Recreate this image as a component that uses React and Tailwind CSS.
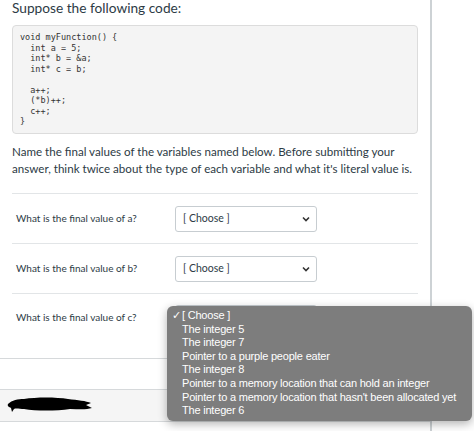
const codeLines = [
  "void myFunction() {",
  "  int a = 5;",
  "  int* b = &a;",
  "  int* c = b;",
  "",
  "  a++;",
  "  (*b)++;",
  "  c++;",
  "}",
];

const options = [
  "[ Choose ]",
  "The integer 5",
  "The integer 7",
  "Pointer to a purple people eater",
  "The integer 8",
  "Pointer to a memory location that can hold an integer",
  "Pointer to a memory location that hasn't been allocated yet",
  "The integer 6",
];

const Chevron = () => (
  <svg width="8" height="6" viewBox="0 0 8 6" className="text-[#333]">
    <path d="M1 1.5 L4 4.5 L7 1.5" fill="none" stroke="currentColor" strokeWidth="1.6" />
  </svg>
);

const SelectBox = ({ open }) => (
  <div className="w-[142px] h-[26px] border border-[#c7cdd1] rounded-[3px] bg-white flex items-center justify-between pl-[7px] pr-[6px]">
    <span className="text-[10.5px] text-[#2d3b45]">{open ? "" : "[ Choose ]"}</span>
    {!open && <Chevron />}
  </div>
);

const Row = ({ label, last }) => (
  <div className={`flex items-start pl-1 ${last ? "h-[64px] pt-[11px]" : "h-[50px] pt-3 border-b border-[#e2e5e7]"}`}>
    <div className="w-[159px] text-[10px] leading-[13px] text-[#2d3b45] pt-[6px]">{label}</div>
    <SelectBox open={last} />
  </div>
);

export default function App() {
  return (
    <div className="relative w-[474px] h-[431px] bg-white overflow-hidden font-['Lato',sans-serif]">
      <div className="w-[432px] h-full border-r-2 border-[#cdd2d5]">
        <div className="px-3">
          <h2 className="text-[13.7px] leading-[16px] text-[#2d3b45] pb-[9px]">Suppose the following code:</h2>
          <pre className="bg-[#f4f4f4] border border-[#dcdcdc] rounded-[4px] px-[7px] py-[6px] font-['DejaVu_Sans_Mono',monospace] text-[8.5px] leading-[10.5px] text-[#333]">
            {codeLines.map((l, i) => (
              <div key={i} className="h-[10.5px]">{l}</div>
            ))}
          </pre>
          <p className="mt-[9px] text-[11.6px] leading-[17px] text-[#2d3b45]">
            Name the final values of the variables named below. Before submitting your answer, think twice about the type of each variable and what it's literal value is.
          </p>
          <div className="mt-4 border-t border-[#e2e5e7]">
            <Row label="What is the final value of a?" />
            <Row label="What is the final value of b?" />
            <Row label="What is the final value of c?" last />
          </div>
        </div>
        <div className="h-[31px] border-t border-[#d6d9db]" />
        <div className="h-[33px] bg-[#f5f5f5] border-y border-[#d6d9db] flex items-center pl-[6px]">
          <svg width="88" height="18" viewBox="0 0 88 18">
            <path
              d="M2 8 C6 4 12 3 18 3 C30 1 50 1 62 3 C72 4 80 5 85 7 L80 9 L86 12 C80 14 72 13 64 13 C50 15 30 15 18 13 C14 13 10 12 8 13 L6 16 L5 12 C3 11 1 10 2 8 Z"
              fill="#000"
            />
          </svg>
        </div>
      </div>

      <div className="absolute left-[167px] top-[306px] w-[305px] h-[115px] rounded-[6px] bg-[#7d7d7d] shadow-[0_3px_10px_rgba(0,0,0,0.3)] pt-[3px] font-['Liberation_Sans',Arial,sans-serif] text-[11px] tracking-[-0.2px] leading-[13.6px] text-white">
        {options.map((o, i) => (
          <div key={i} className="relative pl-[15px] h-[13.6px]">
            {i === 0 && <span className="absolute left-[5px]">✓</span>}
            {o}
          </div>
        ))}
      </div>
    </div>
  );
}
